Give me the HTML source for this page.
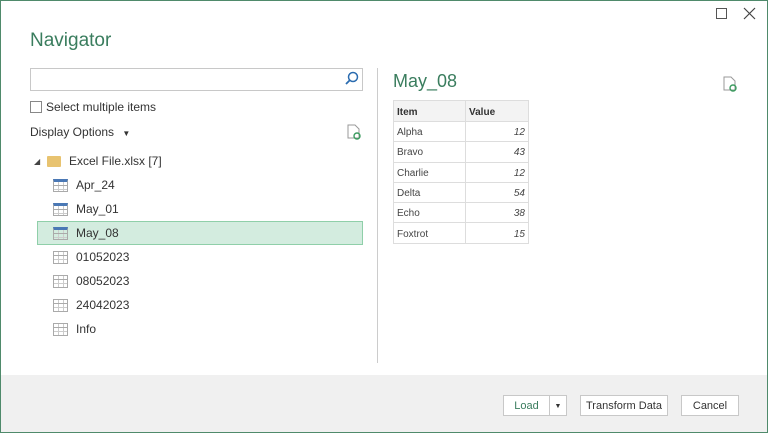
<!DOCTYPE html>
<html><head><style>
*{margin:0;padding:0;box-sizing:border-box}
body{width:768px;height:433px;overflow:hidden;font-family:"Segoe UI","Liberation Sans",sans-serif;font-size:12px;color:#333;background:#fff;position:relative}
.frame{position:absolute;inset:0;border:1px solid #4f8a6b}
.a{position:absolute}
.footer{position:absolute;left:1px;right:1px;top:375px;bottom:1px;background:#f0f0f0}
.btn{position:absolute;top:395px;height:21px;background:#fff;border:1px solid #c8c8c8;font-size:11px;text-align:center;line-height:21px;color:#333}
.row{position:absolute;left:76px;font-size:12px}
.ic{position:absolute;left:53px;width:15px;height:13px;border:1px solid #aaa;background:
linear-gradient(#aaa,#aaa) 0 3px/100% 1px no-repeat,linear-gradient(#ccc,#ccc) 0 7px/100% 1px no-repeat,linear-gradient(90deg,transparent 4px,#ccc 4px,#ccc 5px,transparent 5px,transparent 9px,#ccc 9px,#ccc 10px,transparent 10px)}
.ic.t{border-top:3px solid #4a78b5}
table{position:absolute;left:393px;top:100px;border-collapse:collapse;font-size:10px}
td{border:1px solid #ddd;height:20.3px;padding:2px 3px 0;color:#444}
td.n{text-align:right;font-style:italic}
th{border:1px solid #ddd;background:#f3f3f3;height:21px;text-align:left;padding:2px 3px 0;font-weight:bold;font-size:10px;color:#333}
</style></head><body>
<div class="frame"></div>
<div class="a" style="left:716px;top:8px;width:11px;height:11px;border:1px solid #555"></div>
<svg class="a" style="left:743px;top:7px" width="13" height="13"><path d="M1 1L12 12M12 1L1 12" stroke="#444" stroke-width="1.2"/></svg>
<div class="a" style="left:30px;top:30px;font-size:19px;color:#3a7d5e">Navigator</div>
<div class="a" style="left:30px;top:68px;width:333px;height:23px;border:1px solid #c8c8c8"></div>
<svg class="a" style="left:344px;top:71px" width="15" height="15"><circle cx="9" cy="6" r="4.5" fill="none" stroke="#2b6cb0" stroke-width="1.5"/><line x1="6" y1="9" x2="2" y2="13" stroke="#2b6cb0" stroke-width="1.8"/></svg>
<div class="a" style="left:30px;top:101px;width:12px;height:12px;border:1px solid #888"></div>
<div class="a" style="left:46px;top:100px">Select multiple items</div>
<div class="a" style="left:30px;top:125px">Display Options <span style="font-size:8px;margin-left:5px">▼</span></div>
<svg class="a" style="left:346px;top:124px" width="16" height="16"><path d="M2 1h7l4 4v9H2z" fill="#fff" stroke="#999"/><circle cx="11" cy="12" r="3" fill="none" stroke="#3a9a5e" stroke-width="1.4"/></svg>
<div class="a" style="left:34px;top:157px;font-size:8px;color:#444">◢</div>
<div class="a" style="left:47px;top:156px;width:14px;height:11px;background:#e8c370;border-radius:1px"></div>
<div class="row" style="left:69px;top:154px">Excel File.xlsx [7]</div>
<div class="a" style="left:37px;top:221px;width:326px;height:24px;background:#d3ecdf;border:1px solid #8fcfa9"></div>
<div class="ic t" style="top:179px"></div><div class="row" style="top:178px">Apr_24</div>
<div class="ic t" style="top:203px"></div><div class="row" style="top:202px">May_01</div>
<div class="ic t" style="top:227px"></div><div class="row" style="top:226px">May_08</div>
<div class="ic" style="top:251px"></div><div class="row" style="top:250px">01052023</div>
<div class="ic" style="top:275px"></div><div class="row" style="top:274px">08052023</div>
<div class="ic" style="top:299px"></div><div class="row" style="top:298px">24042023</div>
<div class="ic" style="top:323px"></div><div class="row" style="top:322px">Info</div>
<div class="a" style="left:377px;top:68px;width:1px;height:295px;background:#ccc"></div>
<div class="a" style="left:393px;top:71px;font-size:18px;color:#3a7d5e">May_08</div>
<svg class="a" style="left:722px;top:76px" width="16" height="16"><path d="M2 1h7l4 4v9H2z" fill="#fff" stroke="#999"/><circle cx="11" cy="12" r="3" fill="none" stroke="#3a9a5e" stroke-width="1.4"/></svg>
<table>
<tr><th style="width:72px">Item</th><th style="width:63px">Value</th></tr>
<tr><td>Alpha</td><td class="n">12</td></tr>
<tr><td>Bravo</td><td class="n">43</td></tr>
<tr><td>Charlie</td><td class="n">12</td></tr>
<tr><td>Delta</td><td class="n">54</td></tr>
<tr><td>Echo</td><td class="n">38</td></tr>
<tr><td>Foxtrot</td><td class="n">15</td></tr>
</table>
<div class="footer"></div>
<div class="btn" style="left:503px;width:47px;color:#3a7d5e">Load</div>
<div class="btn" style="left:549px;width:18px;font-size:7px">▼</div>
<div class="btn" style="left:580px;width:88px">Transform Data</div>
<div class="btn" style="left:681px;width:58px">Cancel</div>
</body></html>
